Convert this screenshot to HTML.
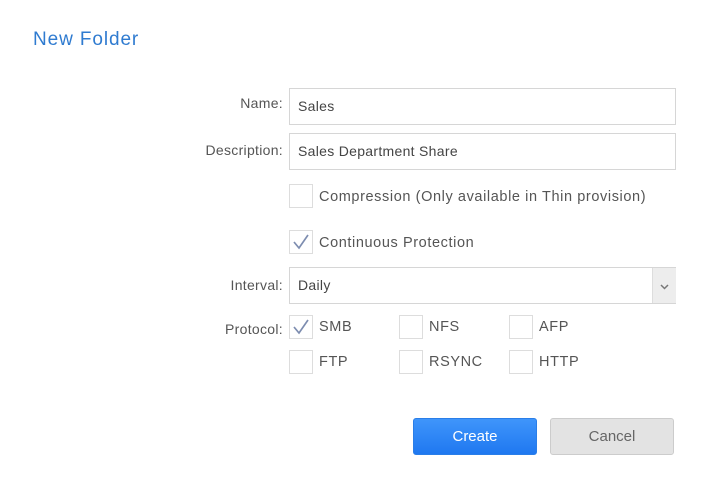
<!DOCTYPE html>
<html><head><style>
body{margin:0;width:708px;height:483px;background:#fff;font-family:"Liberation Sans",sans-serif;position:relative;overflow:hidden;color:#444}
.a{position:absolute}
.t{font-size:19px;color:#2f7bd0;left:33px;top:29px;letter-spacing:0.9px}
.lbl{font-size:14px;color:#555;text-align:right;width:130px;letter-spacing:0.3px}
.in{border:1px solid #d6d6d6;box-sizing:border-box;font-size:14px;color:#444;padding-left:8px;line-height:34px;background:#fff;letter-spacing:0.3px}
.cb{width:24px;height:24px;border:1px solid #ddd;box-sizing:border-box;background:#fff}
.ct{font-size:14.5px;color:#555;letter-spacing:0.6px}
.btn{width:124px;height:37px;box-sizing:border-box;border-radius:3px;font-size:15px;text-align:center;line-height:36px}
</style></head><body>
<div class="a t">New Folder</div>
<div class="a lbl" style="left:153px;top:95px">Name:</div>
<div class="a in" style="left:289px;top:88px;width:387px;height:37px">Sales</div>
<div class="a lbl" style="left:153px;top:142px">Description:</div>
<div class="a in" style="left:289px;top:133px;width:387px;height:37px">Sales Department Share</div>
<div class="a cb" style="left:289px;top:184px"></div>
<div class="a ct" style="left:319px;top:189px">Compression&nbsp;(Only available in Thin provision)</div>
<div class="a cb" style="left:289px;top:230px"><svg width="22" height="22" viewBox="0 0 22 22"><path d="M4 11 L9 17 L18 4" fill="none" stroke="#7d8db0" stroke-width="1.7"/></svg></div>
<div class="a ct" style="left:319px;top:235px">Continuous Protection</div>
<div class="a lbl" style="left:153px;top:277px">Interval:</div>
<div class="a in" style="left:289px;top:267px;width:387px;height:37px">Daily</div>
<div class="a" style="left:652px;top:268px;width:23px;height:35px;background:#ededed;border-left:1px solid #ddd"><svg width="23" height="35"><path d="M8 17 L11.5 20.5 L15 17" fill="none" stroke="#777" stroke-width="1.5"/></svg></div>
<div class="a lbl" style="left:153px;top:321px">Protocol:</div>
<div class="a cb" style="left:289px;top:315px"><svg width="22" height="22" viewBox="0 0 22 22"><path d="M4 11 L9 17 L18 4" fill="none" stroke="#7d8db0" stroke-width="1.7"/></svg></div>
<div class="a ct" style="left:319px;top:319px">SMB</div>
<div class="a cb" style="left:399px;top:315px"></div><div class="a ct" style="left:429px;top:319px">NFS</div>
<div class="a cb" style="left:509px;top:315px"></div><div class="a ct" style="left:539px;top:319px">AFP</div>
<div class="a cb" style="left:289px;top:350px"></div><div class="a ct" style="left:319px;top:354px">FTP</div>
<div class="a cb" style="left:399px;top:350px"></div><div class="a ct" style="left:429px;top:354px">RSYNC</div>
<div class="a cb" style="left:509px;top:350px"></div><div class="a ct" style="left:539px;top:354px">HTTP</div>
<div class="a btn" style="left:413px;top:418px;background:linear-gradient(#3f95fb,#1f78f0);color:#fff;border:1px solid #2a7ee8">Create</div>
<div class="a btn" style="left:550px;top:418px;background:#e3e3e3;color:#666;border:1px solid #ccc">Cancel</div>
</body></html>
